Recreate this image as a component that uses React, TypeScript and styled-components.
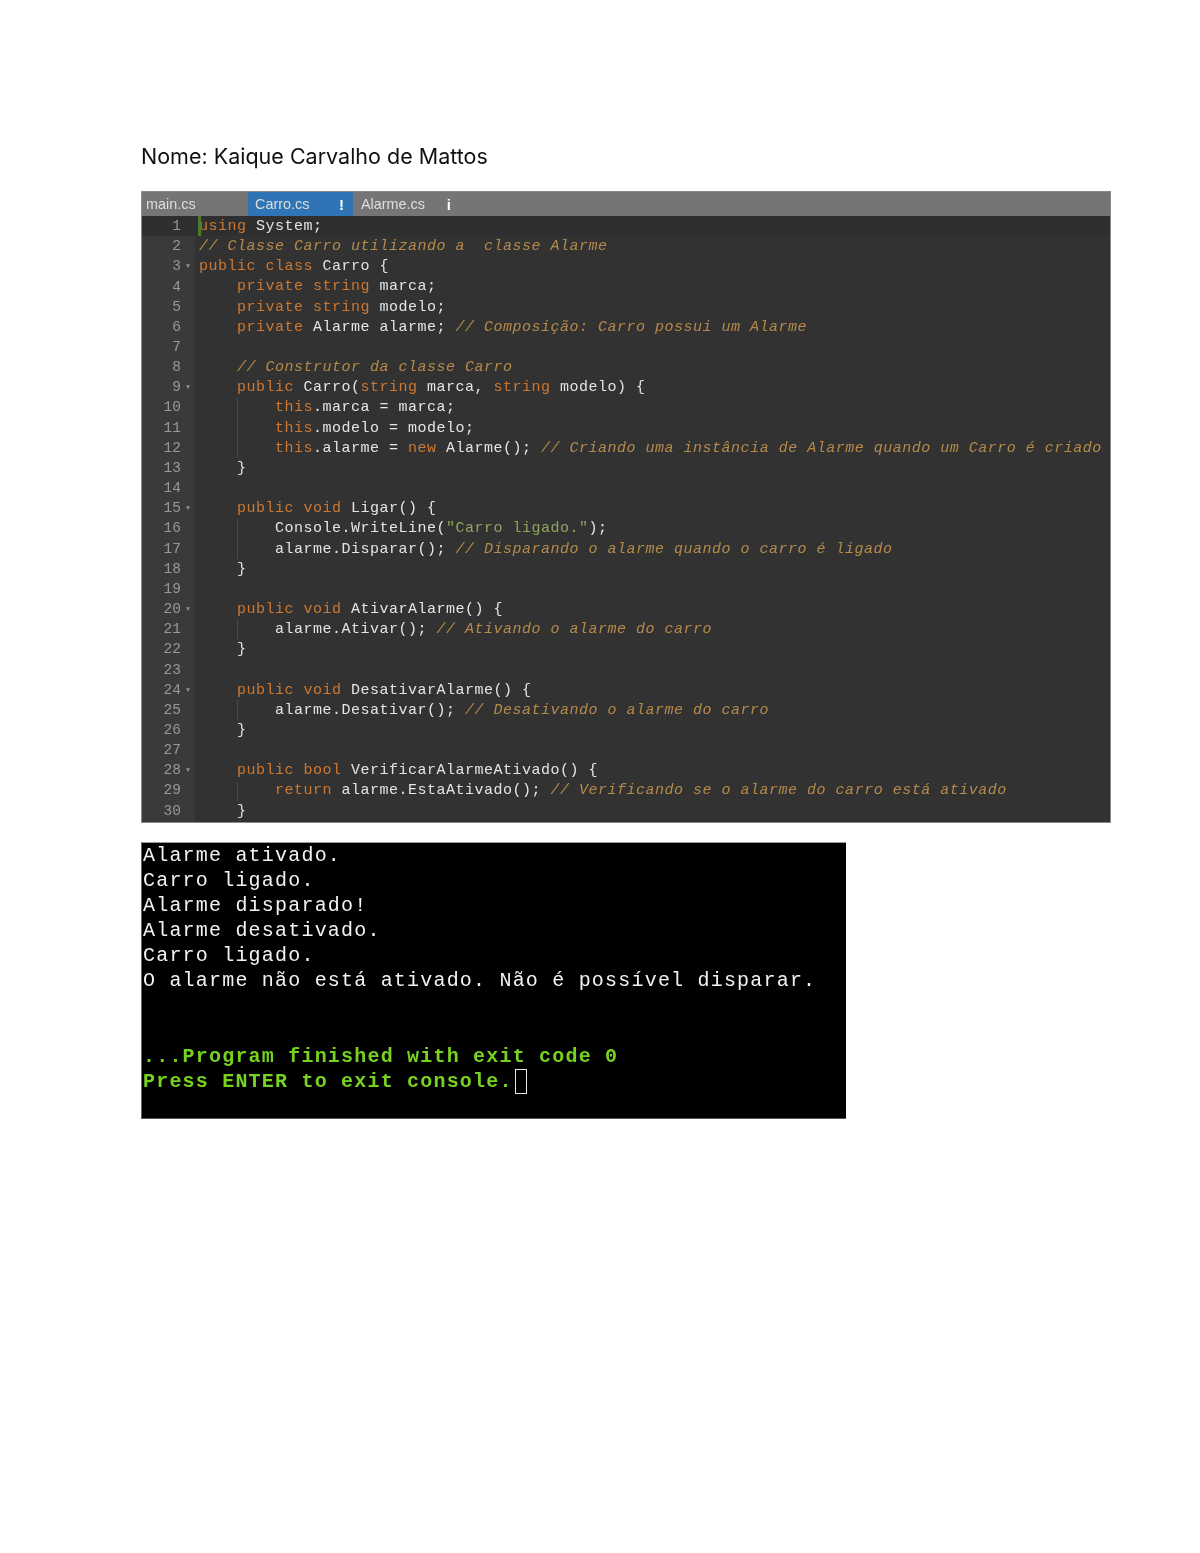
import React from "react";
import styled, { createGlobalStyle } from "styled-components";

const GlobalStyle = createGlobalStyle`
  html, body {
    margin: 0;
    padding: 0;
    background: #fff;
  }
`;

const Page = styled.div`
  width: 1200px;
  height: 1553px;
  box-sizing: border-box;
  padding: 143px 89px 0 141px;
  background: #fff;
  overflow: hidden;
`;

const Title = styled.h1`
  margin: 0 0 22px;
  font-family: "Inter", "Liberation Sans", sans-serif;
  font-size: 21.5px;
  line-height: 26px;
  font-weight: 400;
  color: #111;
  filter: blur(0.35px);
`;

const Editor = styled.div`
  width: 970px;
  height: 632px;
  box-sizing: border-box;
  border: 1px solid #8a8a8a;
  background: #323232;
  overflow: hidden;
`;

const TabBar = styled.div`
  display: flex;
  height: 24px;
  background: #757575;
`;

const Tab = styled.div<{ $active?: boolean; $width: number; $left: number; $right: number }>`
  display: flex;
  align-items: center;
  justify-content: space-between;
  box-sizing: border-box;
  width: ${(p) => p.$width}px;
  padding: 0 ${(p) => p.$right}px 0 ${(p) => p.$left}px;
  margin-right: 1px;
  background: ${(p) => (p.$active ? "#2f75b5" : "#757575")};
  color: #dedede;
  font-family: "Liberation Sans", Arial, sans-serif;
  font-size: 14.4px;
  filter: blur(0.5px);
`;

const Warn = styled.span`
  color: #fff;
  font-weight: 700;
  font-size: 15px;
`;

const CodeArea = styled.div`
  display: grid;
  grid-template-columns: 53px 1fr;
  height: 607px;
`;

const Gutter = styled.div`
  background: #3a3a3a;
`;

const GutterCell = styled.div<{ $current?: boolean }>`
  display: flex;
  justify-content: flex-end;
  align-items: center;
  box-sizing: border-box;
  height: 20.17px;
  padding-right: 2px;
  background: ${(p) => (p.$current ? "#2f2f2f" : "transparent")};
  color: #989898;
  font-family: "Liberation Mono", monospace;
  font-size: 14.5px;
  filter: blur(0.5px);
`;

const Fold = styled.span<{ $show: boolean }>`
  width: 10px;
  margin-left: 2px;
  color: #8c8c8c;
  font-size: 7px;
  text-align: center;
  visibility: ${(p) => (p.$show ? "visible" : "hidden")};
`;

const Code = styled.div`
  position: relative;
  padding-left: 4px;
`;

const CodeLine = styled.div<{ $current?: boolean }>`
  height: 20.17px;
  line-height: 22px;
  margin-left: -4px;
  padding-left: 4px;
  white-space: pre;
  background: ${(p) => (p.$current ? "#2f2f2f" : "transparent")};
  color: #e4e4e4;
  font-family: "Liberation Mono", monospace;
  font-size: 15px;
  letter-spacing: 0.5px;
  filter: blur(0.5px);
`;

const Kw = styled.span`
  color: #cc7832;
`;

const Comment = styled.span`
  color: #b58a4a;
  font-style: italic;
`;

const Str = styled.span`
  color: #8fa65c;
`;

/* little marks that sit over the code */
const Guide = styled.div<{ $from: number; $count: number }>`
  position: absolute;
  left: 42px;
  top: ${(p) => p.$from * 20.17}px;
  height: ${(p) => p.$count * 20.17}px;
  width: 1px;
  background: #4a4a4a;
`;

const Caret = styled.div`
  position: absolute;
  left: 3px;
  top: 0;
  width: 3px;
  height: 20px;
  background: #4f7a2c;
`;

const Terminal = styled.div`
  width: 705px;
  height: 277px;
  margin-top: 19px;
  box-sizing: border-box;
  padding: 0 0 0 1px;
  background: #000;
  border-left: 1px solid #3b6ea5;
  border-top: 1px solid #9a9a9a;
  border-bottom: 1px solid #555;
  font-family: "Liberation Mono", "Courier New", monospace;
  font-size: 20px;
  letter-spacing: 1.2px;
  filter: blur(0.35px);
`;

const TermLine = styled.div<{ $green?: boolean }>`
  height: 25.1px;
  line-height: 25.1px;
  white-space: pre;
  color: ${(p) => (p.$green ? "#76d21f" : "#f2f2f2")};
  font-weight: ${(p) => (p.$green ? 700 : 400)};
`;

const Cursor = styled.span`
  display: inline-block;
  width: 10px;
  height: 23px;
  margin-left: 2px;
  vertical-align: -7px;
  border: 1.5px solid #e8e8e8;
`;

type Tok = string | { k: string } | { c: string } | { s: string };

const code: Tok[][] = [
  [{ k: "using" }, " System;"],
  [{ c: "// Classe Carro utilizando a  classe Alarme" }],
  [{ k: "public class" }, " Carro {"],
  ["    ", { k: "private string" }, " marca;"],
  ["    ", { k: "private string" }, " modelo;"],
  ["    ", { k: "private" }, " Alarme alarme; ", { c: "// Composição: Carro possui um Alarme" }],
  [],
  ["    ", { c: "// Construtor da classe Carro" }],
  ["    ", { k: "public" }, " Carro(", { k: "string" }, " marca, ", { k: "string" }, " modelo) {"],
  ["        ", { k: "this" }, ".marca = marca;"],
  ["        ", { k: "this" }, ".modelo = modelo;"],
  ["        ", { k: "this" }, ".alarme = ", { k: "new" }, " Alarme(); ", { c: "// Criando uma instância de Alarme quando um Carro é criado" }],
  ["    }"],
  [],
  ["    ", { k: "public void" }, " Ligar() {"],
  ["        Console.WriteLine(", { s: '"Carro ligado."' }, ");"],
  ["        alarme.Disparar(); ", { c: "// Disparando o alarme quando o carro é ligado" }],
  ["    }"],
  [],
  ["    ", { k: "public void" }, " AtivarAlarme() {"],
  ["        alarme.Ativar(); ", { c: "// Ativando o alarme do carro" }],
  ["    }"],
  [],
  ["    ", { k: "public void" }, " DesativarAlarme() {"],
  ["        alarme.Desativar(); ", { c: "// Desativando o alarme do carro" }],
  ["    }"],
  [],
  ["    ", { k: "public bool" }, " VerificarAlarmeAtivado() {"],
  ["        ", { k: "return" }, " alarme.EstaAtivado(); ", { c: "// Verificando se o alarme do carro está ativado" }],
  ["    }"],
];

const folds = [3, 9, 15, 20, 24, 28];
const guides = [
  [9, 3],
  [15, 2],
  [20, 1],
  [24, 1],
  [28, 1],
];

const renderTok = (t: Tok, i: number) => {
  if (typeof t === "string") return <span key={i}>{t}</span>;
  if ("k" in t) return <Kw key={i}>{t.k}</Kw>;
  if ("c" in t) return <Comment key={i}>{t.c}</Comment>;
  return <Str key={i}>{t.s}</Str>;
};

const App: React.FC = () => (
  <Page>
    <GlobalStyle />
    <Title>Nome: Kaique Carvalho de Mattos</Title>
    <Editor>
      <TabBar>
        <Tab $width={105} $left={4} $right={6}>main.cs</Tab>
        <Tab $active $width={105} $left={7} $right={9}>
          Carro.cs <Warn>!</Warn>
        </Tab>
        <Tab $width={104} $left={7} $right={7}>
          Alarme.cs <Warn>i</Warn>
        </Tab>
      </TabBar>
      <CodeArea>
        <Gutter>
          {code.map((_, i) => (
            <GutterCell key={i} $current={i === 0}>
              {i + 1}
              <Fold $show={folds.includes(i + 1)}>▼</Fold>
            </GutterCell>
          ))}
        </Gutter>
        <Code>
          {code.map((line, i) => (
            <CodeLine key={i} $current={i === 0}>
              {line.map(renderTok)}
            </CodeLine>
          ))}
          {guides.map(([from, count]) => (
            <Guide key={from} $from={from} $count={count} />
          ))}
          <Caret />
        </Code>
      </CodeArea>
    </Editor>
    <Terminal>
      <TermLine>Alarme ativado.</TermLine>
      <TermLine>Carro ligado.</TermLine>
      <TermLine>Alarme disparado!</TermLine>
      <TermLine>Alarme desativado.</TermLine>
      <TermLine>Carro ligado.</TermLine>
      <TermLine>O alarme não está ativado. Não é possível disparar.</TermLine>
      <TermLine> </TermLine>
      <TermLine> </TermLine>
      <TermLine $green>...Program finished with exit code 0</TermLine>
      <TermLine $green>
        Press ENTER to exit console.
        <Cursor />
      </TermLine>
    </Terminal>
  </Page>
);

export default App;
